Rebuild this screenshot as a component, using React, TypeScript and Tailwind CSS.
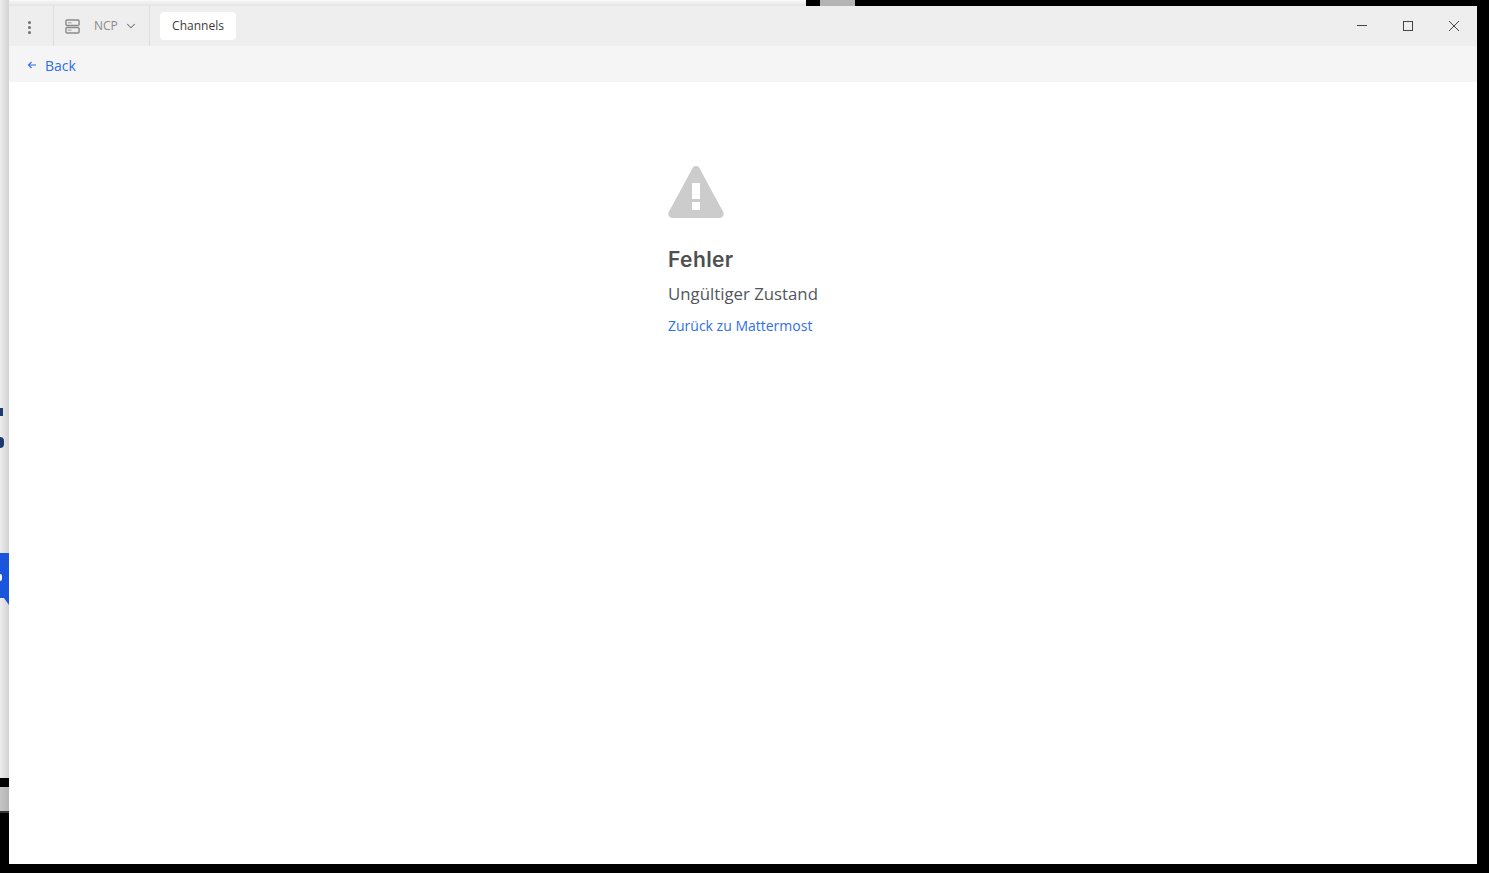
import React from "react";
import { ChevronDown } from "lucide-react";

const openSans = "font-['Open_Sans','Liberation_Sans',sans-serif]";

// Server stack glyph next to the team name
const ServerIcon = () => (
  <svg width="15" height="15" viewBox="0 0 16 16" fill="none" stroke="#8a8a8a" strokeWidth="1.5">
    <rect x="1" y="1" width="14" height="6" rx="1.2" />
    <rect x="1" y="9" width="14" height="6" rx="1.2" />
    <path d="M3 4h4M3 12h4" stroke="#b5b5b5" />
  </svg>
);

const WarningIcon = () => (
  <svg width="56" height="52" viewBox="0 0 56 52">
    <path
      fillRule="evenodd"
      fill="#cccccc"
      d="M24.6 2 C26.2 -0.6 29.8 -0.6 31.4 2 L55.2 46 C56.7 48.8 54.9 52 51.8 52 L4.2 52 C1.1 52 -0.7 48.8 0.8 46 Z M24 17 L24 33 L32 33 L32 17 Z M24 36 L24 44 L32 44 L32 36 Z"
    />
  </svg>
);

export default function App() {
  return (
    <div className="relative h-[873px] w-[1489px] overflow-hidden bg-black pl-[9px] pr-[12px] pt-[6px] pb-[9px]">
      {/* Bits of other windows behind this one */}
      <div className="absolute left-0 top-0 h-[6px] w-[806px] bg-gradient-to-b from-[#f8f8f8] to-[#e4e4e4]" />
      <div className="absolute left-[820px] top-0 h-[6px] w-[35px] bg-[#b4b4b4]" />
      <div className="absolute left-0 top-0 h-[778px] w-[9px] bg-gradient-to-r from-[#ededed] to-[#d2d2d2]" />
      <div className="absolute left-0 top-[408px] h-[8px] w-[3px] bg-[#1d3a6e]" />
      <div className="absolute left-0 top-[437px] h-[11px] w-[4px] rounded-r-full bg-[#1d3a6e]" />
      <svg className="absolute left-0 top-[553px]" width="9" height="52" viewBox="0 0 9 52">
        <path d="M0 0H9V52L4 45H0Z" fill="#1a56db" />
      </svg>
      <div className="absolute left-0 top-[574px] h-[7px] w-[2px] rounded-r-full bg-white" />
      <div className="absolute left-0 top-[787px] h-[24px] w-[9px] bg-gradient-to-r from-[#c4c4c4] to-[#b4b4b4]" />
      <div className="absolute left-0 top-[811px] h-[2px] w-[9px] bg-[#333333]" />

      <div className={`relative flex h-full flex-col bg-white ${openSans}`}>
        {/* Title bar */}
        <div className="flex h-[40px] items-stretch bg-[#eeeeee]">
          <div className="flex w-[45px] flex-col items-center justify-center gap-[2px] border-r border-[#dddddd] pr-[3px] pt-[3px]">
            <span className="h-[3px] w-[3px] rounded-full bg-[#6f6f6f]" />
            <span className="h-[3px] w-[3px] rounded-full bg-[#6f6f6f]" />
            <span className="h-[3px] w-[3px] rounded-full bg-[#6f6f6f]" />
          </div>
          <div className="flex w-[96px] items-center border-r border-[#dddddd] pl-[11px]">
            <ServerIcon />
            <span className="ml-[14px] text-[12px] text-[#8a8a8a]">NCP</span>
            <ChevronDown className="ml-[6px] text-[#707070]" size={14} strokeWidth={1.8} />
          </div>
          <div className="flex items-center pl-[10px]">
            <div className="flex h-[28px] w-[76px] items-center justify-center rounded-[4px] bg-white text-[12px] font-medium text-[#3a3a3a]">
              Channels
            </div>
          </div>
          <div className="ml-auto flex items-center gap-[36px] pr-[18px]">
            <svg width="10" height="10" viewBox="0 0 10 10" stroke="#444444" strokeWidth="1">
              <path d="M0 4.5h10" />
            </svg>
            <svg width="10" height="10" viewBox="0 0 10 10" fill="none" stroke="#444444" strokeWidth="1">
              <rect x="0.5" y="0.5" width="9" height="9" />
            </svg>
            <svg width="10" height="10" viewBox="0 0 10 10" stroke="#444444" strokeWidth="1">
              <path d="M0 0l10 10M10 0L0 10" />
            </svg>
          </div>
        </div>

        {/* Back bar */}
        <div className="flex h-[36px] items-center bg-[#f5f5f5] pl-[18px] pt-[2px] text-[14px] text-[#2f6fe8]">
          <svg width="10" height="10" viewBox="0 0 10 10" fill="none" stroke="#2f6fe8" strokeWidth="1.1">
            <path d="M9 5H1.5M4.5 2L1.5 5l3 3" />
          </svg>
          <span className="ml-[8px]">Back</span>
        </div>

        {/* Error body */}
        <div className="flex flex-col pl-[659px] pt-[84px]">
          <WarningIcon />
          <h1 className="mt-[28px] font-['Inter',sans-serif] text-[21px] font-semibold leading-[28px] tracking-[0.4px] text-[#4f4f4f]">
            Fehler
          </h1>
          <p className="mt-[8px] text-[16.8px] leading-[24px] text-[#51565e]">Ungültiger Zustand</p>
          <a className="mt-[10px] text-[14px] leading-[20px] text-[#2f6fe8]">Zurück zu Mattermost</a>
        </div>
      </div>
    </div>
  );
}
